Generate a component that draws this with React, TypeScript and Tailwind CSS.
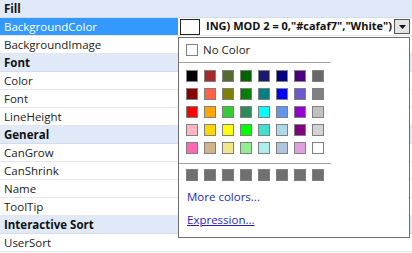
import React from 'react';

type Row = { label: string; header?: boolean; selected?: boolean };

const rows: Row[] = [
  { label: 'Fill', header: true },
  { label: 'BackgroundColor', selected: true },
  { label: 'BackgroundImage' },
  { label: 'Font', header: true },
  { label: 'Color' },
  { label: 'Font' },
  { label: 'LineHeight' },
  { label: 'General', header: true },
  { label: 'CanGrow' },
  { label: 'CanShrink' },
  { label: 'Name' },
  { label: 'ToolTip' },
  { label: 'Interactive Sort', header: true },
  { label: 'UserSort' },
];

const palette: string[][] = [
  ['#000000', '#a52a2a', '#556b2f', '#006400', '#191970', '#000080', '#4b0082', '#696969'],
  ['#8b0000', '#ff6347', '#808000', '#008000', '#008080', '#0000ff', '#6a5acd', '#808080'],
  ['#ff0000', '#ffa500', '#32cd32', '#2e8b57', '#00ffff', '#6495ed', '#9400d3', '#c0c0c0'],
  ['#ffb6c1', '#ffd700', '#ffff00', '#00ff00', '#40e0d0', '#add8e6', '#800080', '#d3d3d3'],
  ['#ff69b4', '#d2b48c', '#f0e68c', '#90ee90', '#afeeee', '#b0c4de', '#dda0dd', '#ffffff'],
];

const ValueEditor: React.FC = () => (
  <div className="flex items-center h-full pl-[2px] pr-[2px]">
    <div className="w-[20px] h-[16px] border border-[#222] bg-white shrink-0" />
    <div className="flex-1 min-w-0 overflow-hidden flex justify-end ml-[6px] mr-[2px]">
      <span className="whitespace-nowrap font-bold text-[11px] text-[#111]">
        =IIF(ROWNUMBER(NOTHING) MOD 2 = 0,"#cafaf7","White")
      </span>
    </div>
    <button className="w-[16px] h-[15px] border border-[#555] bg-[#e4e4e4] flex items-center justify-center shrink-0">
      <svg width="7" height="4" viewBox="0 0 7 4">
        <path d="M0 0h7L3.5 4z" fill="#111" />
      </svg>
    </button>
  </div>
);

const ColorPopup: React.FC = () => (
  <div className="absolute left-[178px] top-[37px] w-[232px] h-[201px] border border-[#6e6e6e] bg-white flex flex-col">
    <div className="h-[24px] flex items-center pl-[7px] gap-[5px]">
      <div className="w-[12px] h-[12px] border border-[#808080] bg-white" />
      <span className="text-[11.5px] text-[#222]">No Color</span>
    </div>
    <div className="h-px w-[152px] bg-[#a0a0a0]" />
    <div className="mt-[7px] pl-[7px] flex flex-col gap-[6px]">
      {palette.map((row, i) => (
        <div key={i} className="flex gap-[6px]">
          {row.map((c, j) => (
            <div key={j} className="w-[12px] h-[12px] border border-[#808080]" style={{ backgroundColor: c }} />
          ))}
        </div>
      ))}
    </div>
    <div className="mt-[9px] h-px w-[152px] bg-[#a0a0a0]" />
    <div className="mt-[5px] pl-[7px] flex gap-[6px]">
      {Array.from({ length: 8 }).map((_, j) => (
        <div key={j} className="w-[12px] h-[12px] border border-[#808080] bg-[#6f6f6f]" />
      ))}
    </div>
    <div className="mt-[8px] pl-[8px] h-[16px] leading-[16px] text-[11.5px] text-[#1f1fc8]">More colors...</div>
    <div className="mt-[7px] pl-[8px] h-[16px] leading-[16px] text-[11.5px] text-[#1f1fc8] underline">Expression...</div>
  </div>
);

const App: React.FC = () => {
  return (
    <div className="relative w-[412px] h-[253px] overflow-hidden bg-white" style={{ fontFamily: '"Open Sans", "Noto Sans", sans-serif' }}>
      <div className="flex flex-col">
        {rows.map((r, i) =>
          r.header ? (
            <div key={i} className="h-[18px] flex items-center bg-[#dfe9f7] border-b border-[#d2dcea] pl-[4px]">
              <span className="text-[11.5px] font-bold text-[#111]">{r.label}</span>
            </div>
          ) : (
            <div key={i} className="h-[18px] flex border-b border-[#e6e6e6]">
              <div className={`w-[178px] flex items-center pl-[4px] ${r.selected ? 'bg-[#3399ff] text-white' : 'text-[#222]'}`}>
                <span className="text-[11.5px]">{r.label}</span>
              </div>
              <div className="flex-1 min-w-0">{r.selected && <ValueEditor />}</div>
            </div>
          )
        )}
      </div>
      <ColorPopup />
    </div>
  );
};

export default App;
